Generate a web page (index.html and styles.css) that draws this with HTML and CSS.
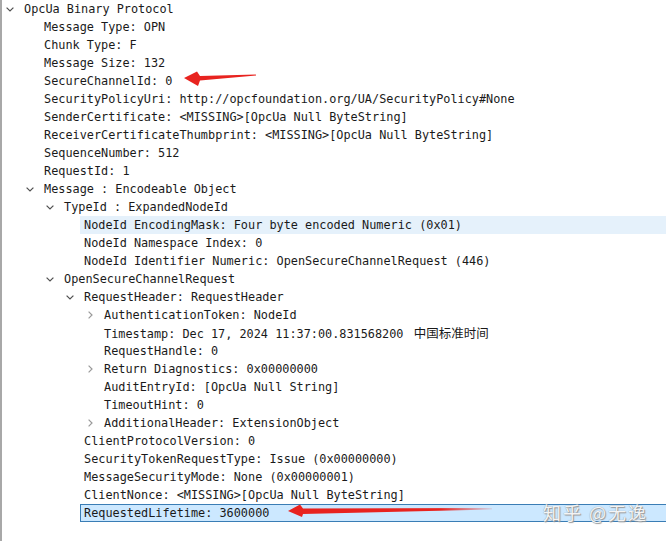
FILE: index.html
```html
<!DOCTYPE html>
<html lang="zh">
<head>
    <meta charset="UTF-8">
    <title>OpcUa Binary Protocol</title>
    <link rel="stylesheet" href="styles.css">
</head>
<body>
    <div class="pane">
        <div class="tree">
            <div class="row l0"><span class="tog"><svg class="down" width="8" height="5"><path d="M0.6 0.6 L4 4 L7.4 0.6"/></svg></span><span class="txt">OpcUa Binary Protocol</span></div>
            <div class="row l1"><span class="tog"></span><span class="txt">Message Type: OPN</span></div>
            <div class="row l1"><span class="tog"></span><span class="txt">Chunk Type: F</span></div>
            <div class="row l1"><span class="tog"></span><span class="txt">Message Size: 132</span></div>
            <div class="row l1"><span class="tog"></span><span class="txt">SecureChannelId: 0</span></div>
            <div class="row l1"><span class="tog"></span><span class="txt">SecurityPolicyUri: http://opcfoundation.org/UA/SecurityPolicy#None</span></div>
            <div class="row l1"><span class="tog"></span><span class="txt">SenderCertificate: &lt;MISSING&gt;[OpcUa Null ByteString]</span></div>
            <div class="row l1"><span class="tog"></span><span class="txt">ReceiverCertificateThumbprint: &lt;MISSING&gt;[OpcUa Null ByteString]</span></div>
            <div class="row l1"><span class="tog"></span><span class="txt">SequenceNumber: 512</span></div>
            <div class="row l1"><span class="tog"></span><span class="txt">RequestId: 1</span></div>
            <div class="row l1"><span class="tog"><svg class="down" width="8" height="5"><path d="M0.6 0.6 L4 4 L7.4 0.6"/></svg></span><span class="txt">Message : Encodeable Object</span></div>
            <div class="row l2"><span class="tog"><svg class="down" width="8" height="5"><path d="M0.6 0.6 L4 4 L7.4 0.6"/></svg></span><span class="txt">TypeId : ExpandedNodeId</span></div>
            <div class="row l3 hover"><span class="tog"></span><span class="txt">NodeId EncodingMask: Four byte encoded Numeric (0x01)</span></div>
            <div class="row l3"><span class="tog"></span><span class="txt">NodeId Namespace Index: 0</span></div>
            <div class="row l3"><span class="tog"></span><span class="txt">NodeId Identifier Numeric: OpenSecureChannelRequest (446)</span></div>
            <div class="row l2"><span class="tog"><svg class="down" width="8" height="5"><path d="M0.6 0.6 L4 4 L7.4 0.6"/></svg></span><span class="txt">OpenSecureChannelRequest</span></div>
            <div class="row l3"><span class="tog"><svg class="down" width="8" height="5"><path d="M0.6 0.6 L4 4 L7.4 0.6"/></svg></span><span class="txt">RequestHeader: RequestHeader</span></div>
            <div class="row l4"><span class="tog"><svg class="right" width="5" height="8"><path d="M0.6 0.6 L4 4 L0.6 7.4"/></svg></span><span class="txt">AuthenticationToken: NodeId</span></div>
            <div class="row l4"><span class="tog"></span><span class="txt">Timestamp: Dec 17, 2024 11:37:00.831568200 <span class="cjk">中国标准时间</span></span></div>
            <div class="row l4"><span class="tog"></span><span class="txt">RequestHandle: 0</span></div>
            <div class="row l4"><span class="tog"><svg class="right" width="5" height="8"><path d="M0.6 0.6 L4 4 L0.6 7.4"/></svg></span><span class="txt">Return Diagnostics: 0x00000000</span></div>
            <div class="row l4"><span class="tog"></span><span class="txt">AuditEntryId: [OpcUa Null String]</span></div>
            <div class="row l4"><span class="tog"></span><span class="txt">TimeoutHint: 0</span></div>
            <div class="row l4"><span class="tog"><svg class="right" width="5" height="8"><path d="M0.6 0.6 L4 4 L0.6 7.4"/></svg></span><span class="txt">AdditionalHeader: ExtensionObject</span></div>
            <div class="row l3"><span class="tog"></span><span class="txt">ClientProtocolVersion: 0</span></div>
            <div class="row l3"><span class="tog"></span><span class="txt">SecurityTokenRequestType: Issue (0x00000000)</span></div>
            <div class="row l3"><span class="tog"></span><span class="txt">MessageSecurityMode: None (0x00000001)</span></div>
            <div class="row l3"><span class="tog"></span><span class="txt">ClientNonce: &lt;MISSING&gt;[OpcUa Null ByteString]</span></div>
            <div class="row l3 selected"><span class="tog"></span><span class="txt">RequestedLifetime: 3600000</span></div>
        </div>

        <!-- red arrows drawn over the tree -->
        <svg class="arrows" width="666" height="541">
            <defs>
                <linearGradient id="fade" x1="288" y1="0" x2="492" y2="0" gradientUnits="userSpaceOnUse">
                    <stop offset="0" stop-color="#e8231f"/>
                    <stop offset="0.75" stop-color="#e8231f"/>
                    <stop offset="1" stop-color="#e8231f" stop-opacity="0.1"/>
                </linearGradient>
            </defs>
            <path fill="#e8231f" d="M184 78 L197 71.5 L200 76 L256 74.6 L256 75.6 L200 80.5 L198 86 Z"/>
            <path fill="url(#fade)" d="M288 511 L300 504.5 L303 508.4 L492 508 L492 509.4 L303 514 L302 517 Z"/>
        </svg>

        <div class="mark">知乎 @无逸</div>
    </div>
</body>
</html>
```

FILE: styles.css
```css
* {
    margin: 0;
    padding: 0;
    box-sizing: border-box;
}

body {
    background: #fff;
    width: 666px;
    height: 541px;
    overflow: hidden;
}

/* Tree pane */
.pane {
    position: relative;
    width: 666px;
    height: 541px;
    border-left: 2px solid #a8a8a8;
}

.tree {
    display: flex;
    flex-direction: column;
    margin-left: -2px;
}

.row {
    display: flex;
    align-items: center;
    height: 18px;
    font-family: "DejaVu Sans Mono", "Liberation Mono", monospace;
    font-size: 11.85px;
    color: #1a1a1a;
    white-space: nowrap;
}

.l0 { padding-left: 0; }
.l1 { padding-left: 20px; }
.l2 { padding-left: 40px; }
.l3 { padding-left: 60px; }
.l4 { padding-left: 80px; }

.tog {
    display: flex;
    align-items: center;
    width: 20px;
    height: 18px;
    padding-left: 6px;
    flex-shrink: 0;
}

.tog svg path {
    fill: none;
    stroke-width: 1.2;
}

.tog .down path {
    stroke: #505050;
}

.tog .right {
    margin-left: 2px;
}

.tog .right path {
    stroke: #9a9a9a;
}

.txt {
    flex: 1;
    height: 18px;
    line-height: 18px;
    padding-left: 4px;
}

.cjk {
    font-family: "Noto Sans CJK SC", sans-serif;
    font-size: 12.5px;
    margin-left: 3px;
}

.hover .txt {
    background: #e5f1fb;
}

.selected .txt {
    background: #cce8ff;
    border: 1px solid #3a7db5;
    border-right: none;
    line-height: 16px;
    padding-left: 3px;
}

/* Overlays */
.arrows {
    position: absolute;
    top: 0;
    left: -2px;
}

.mark {
    position: absolute;
    left: 541px;
    top: 499px;
    font-family: "Noto Sans CJK SC", sans-serif;
    font-size: 18px;
    color: rgba(255, 255, 255, 0.92);
    text-shadow: 0 0 1px #888, 1px 1px 1px #999;
    letter-spacing: 2px;
}
```
